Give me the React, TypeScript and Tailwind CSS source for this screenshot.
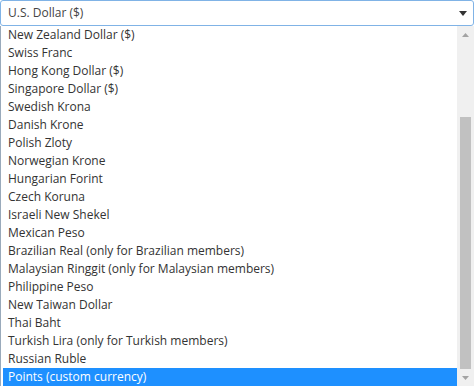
import React from "react";

const items = [
  "New Zealand Dollar ($)",
  "Swiss Franc",
  "Hong Kong Dollar ($)",
  "Singapore Dollar ($)",
  "Swedish Krona",
  "Danish Krone",
  "Polish Zloty",
  "Norwegian Krone",
  "Hungarian Forint",
  "Czech Koruna",
  "Israeli New Shekel",
  "Mexican Peso",
  "Brazilian Real (only for Brazilian members)",
  "Malaysian Ringgit (only for Malaysian members)",
  "Philippine Peso",
  "New Taiwan Dollar",
  "Thai Baht",
  "Turkish Lira (only for Turkish members)",
  "Russian Ruble",
  "Points (custom currency)",
];

export default function App() {
  return (
    <div
      className="w-[474px] h-[386px] bg-white overflow-hidden text-[12px] text-[#333]"
      style={{ fontFamily: '"Open Sans", "Noto Sans", sans-serif' }}
    >
      <div className="h-[26px] border border-[#80b3e6] rounded-[3px] flex items-center pl-[7px] pr-[4px]">
        <span className="flex-1 text-[#444]">U.S. Dollar ($)</span>
        <svg width="8" height="5" viewBox="0 0 8 5" className="mr-[2px]">
          <path d="M0 0 L8 0 L4 5 Z" fill="#333" />
        </svg>
      </div>
      <div className="h-[360px] border-l border-[#9ab] flex">
        <div className="flex-1 flex flex-col">
          {items.map((t, i) => {
            const sel = i === items.length - 1;
            return (
              <div
                key={t}
                className={`h-[18px] leading-[18px] pl-[5px] ml-[2px] whitespace-nowrap ${
                  sel ? "bg-[#1e90ff] text-white" : "text-[#333]"
                }`}
              >
                {t}
              </div>
            );
          })}
        </div>
        <div className="w-[17px] bg-[#f0f0f0] flex flex-col items-center">
          <div className="h-[17px] flex items-center justify-center">
            <svg width="7" height="4" viewBox="0 0 7 4">
              <path d="M0 4 L7 4 L3.5 0 Z" fill="#a3a3a3" />
            </svg>
          </div>
          <div className="h-[74px]" />
          <div className="w-[11px] flex-1 bg-[#c1c1c1]" />
          <div className="h-[17px] flex items-center justify-center">
            <svg width="7" height="4" viewBox="0 0 7 4">
              <path d="M0 0 L7 0 L3.5 4 Z" fill="#a3a3a3" />
            </svg>
          </div>
        </div>
      </div>
    </div>
  );
}
